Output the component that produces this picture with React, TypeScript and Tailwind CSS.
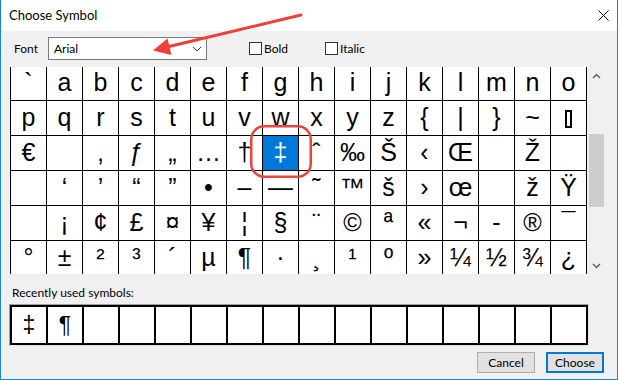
import React from "react";

const rows: string[][] = [
  ["`", "a", "b", "c", "d", "e", "f", "g", "h", "i", "j", "k", "l", "m", "n", "o"],
  ["p", "q", "r", "s", "t", "u", "v", "w", "x", "y", "z", "{", "|", "}", "~", "DEL"],
  ["€", "", "‚", "ƒ", "„", "…", "†", "‡", "ˆ", "‰", "Š", "‹", "Œ", "", "Ž", ""],
  ["", "‘", "’", "“", "”", "•", "–", "—", "˜", "™", "š", "›", "œ", "", "ž", "Ÿ"],
  ["", "¡", "¢", "£", "¤", "¥", "¦", "§", "¨", "©", "ª", "«", "¬", "-", "®", "¯"],
  ["°", "±", "²", "³", "´", "µ", "¶", "·", "¸", "¹", "º", "»", "¼", "½", "¾", "¿"],
];

const recent = ["‡", "¶", "", "", "", "", "", "", "", "", "", "", "", "", "", ""];

function Checkbox({ label, width }: { label: string; width: string }) {
  return (
    <div className={`flex items-center ${width}`}>
      <div className="w-[13px] h-[13px] border border-[#333333] bg-white" />
      <span className="ml-[2px]">{label}</span>
    </div>
  );
}

function Chevron({ up }: { up?: boolean }) {
  return (
    <svg width="9" height="6" viewBox="0 0 9 6">
      <polyline
        points={up ? "1,5 4.5,1.5 8,5" : "1,1 4.5,4.5 8,1"}
        fill="none"
        stroke="#606060"
        strokeWidth="1.5"
      />
    </svg>
  );
}

export default function App() {
  return (
    <div
      className="relative w-[619px] h-[380px] bg-white overflow-hidden text-black"
      style={{ fontFamily: "Lato, 'Liberation Sans', sans-serif" }}
    >
      <div className="w-[618px] h-[380px] flex flex-col border-x border-b border-[#1883d7] bg-[#f0f0f0]">
        {/* Title bar */}
        <div className="h-[31px] shrink-0 bg-white flex items-center justify-between pl-[8px] pr-[8px]">
          <span className="text-[13px]">Choose Symbol</span>
          <svg width="11" height="11" viewBox="0 0 11 11">
            <path d="M0.5 0.5 L10.5 10.5 M10.5 0.5 L0.5 10.5" stroke="#000" strokeWidth="1" />
          </svg>
        </div>

        {/* Font row */}
        <div className="mt-[6px] h-[23px] flex items-center pl-[13px] text-[12px]">
          <span className="w-[34px]">Font</span>
          <div className="w-[159px] h-[23px] border border-[#7a7a7a] bg-white flex items-center justify-between pl-[5px] pr-[4px]">
            <span>Arial</span>
            <svg width="10" height="6" viewBox="0 0 10 6">
              <polyline points="1,1 5,5 9,1" fill="none" stroke="#444" strokeWidth="1" />
            </svg>
          </div>
          <div className="ml-[42px] flex items-center">
            <Checkbox label="Bold" width="w-[76px]" />
            <Checkbox label="Italic" width="" />
          </div>
        </div>

        {/* Symbol grid */}
        <div className="mt-[7px] ml-[9px] h-[207px] flex">
          <div className="h-[207px] overflow-hidden">
            <div
              className="-mt-[2px] border-r border-black bg-white"
              style={{ fontFamily: "'Liberation Sans', Arial, sans-serif" }}
            >
              {rows.map((row, r) => (
                <div key={r} className="flex">
                  {row.map((ch, c) => {
                    const selected = r === 2 && c === 7;
                    return (
                      <div
                        key={c}
                        className={`w-[36px] h-[35px] border-l border-t border-black flex items-center justify-center text-[25px] ${
                          selected ? "bg-[#0078d7] text-white" : ""
                        }`}
                      >
                        {ch === "DEL" ? (
                          <div className="mt-[2px] w-[7px] h-[18px] border-2 border-black" />
                        ) : (
                          ch
                        )}
                      </div>
                    );
                  })}
                </div>
              ))}
            </div>
          </div>
          {/* Scrollbar */}
          <div className="ml-[1px] w-[17px] h-[207px] flex flex-col">
            <div className="h-[17px] flex items-center justify-center">
              <Chevron up />
            </div>
            <div className="flex-1 flex flex-col px-[1px]">
              <div className="mt-[50px] h-[73px] bg-[#cdcdcd]" />
            </div>
            <div className="h-[17px] flex items-center justify-center">
              <Chevron />
            </div>
          </div>
        </div>

        {/* Recently used */}
        <div className="mt-[11px] h-[16px] leading-[16px] pl-[11px] text-[12px]">
          Recently used symbols:
        </div>
        <div className="mt-[3px] ml-[8px] w-fit border border-[#a0a0a0] border-b-[#e3e3e3] border-r-[#e3e3e3]">
          <div
            className="flex border-y-2 border-r-2 border-black bg-white"
            style={{ fontFamily: "'Liberation Sans', Arial, sans-serif" }}
          >
            {recent.map((ch, i) => (
              <div
                key={i}
                className="w-[36px] h-[36px] border-l-2 border-black flex items-center justify-center text-[23px]"
              >
                {ch}
              </div>
            ))}
          </div>
        </div>

        {/* Buttons */}
        <div className="mt-[6px] flex justify-end gap-[11px] pr-[13px] text-[12px]">
          <button className="w-[58px] h-[21px] bg-[#e1e1e1] border border-[#adadad] flex items-center justify-center">
            Cancel
          </button>
          <button className="w-[58px] h-[21px] bg-[#e1e1e1] border-2 border-[#0078d7] flex items-center justify-center">
            Choose
          </button>
        </div>
      </div>

      {/* Annotations */}
      <svg
        className="absolute left-0 top-0 pointer-events-none"
        width="619"
        height="380"
        viewBox="0 0 619 380"
      >
        <line x1="301" y1="15" x2="167" y2="47" stroke="#ee4036" strokeWidth="3" strokeLinecap="round" />
        <polygon points="153,50.5 167.5,38.5 171.5,55" fill="#ee4036" />
        <rect
          x="251.25"
          y="126.25"
          width="59.5"
          height="50.5"
          rx="13"
          fill="none"
          stroke="#e8453c"
          strokeWidth="2.5"
        />
      </svg>
    </div>
  );
}
